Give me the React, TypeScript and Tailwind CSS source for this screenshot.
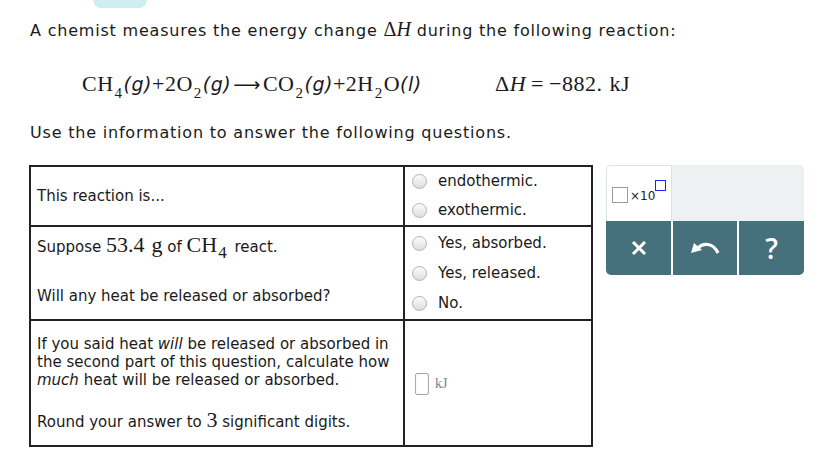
import React from "react";

const sans = { fontFamily: '"DejaVu Sans", Verdana, sans-serif' };
const serif = { fontFamily: '"Liberation Serif", "Times New Roman", serif' };

function Radio({ label, h }: { label: string; h: string }) {
  return (
    <div className={"flex items-center " + h}>
      <span className="ml-[7px] w-[15px] h-[15px] rounded-full border border-[#b4b4b4] bg-gradient-to-b from-[#fdfdfd] to-[#dcdcdc]" />
      <span className="ml-[11px] text-[15px] text-[#1a1a1a]" style={sans}>{label}</span>
    </div>
  );
}

function Sub({ c }: { c: string }) {
  return <span className="text-[15px] align-baseline relative top-[7px] ml-[1px] mr-[1px]">{c}</span>;
}

function State({ c }: { c: string }) {
  return (
    <span className="italic" style={sans}>
      <span className="text-[19px]">(</span>
      <span className="text-[19px]">{c}</span>
      <span className="text-[19px]">)</span>
    </span>
  );
}

export default function App() {
  return (
    <div className="w-[825px] h-[476px] bg-white relative overflow-hidden text-[#1a1a1a]" style={sans}>
      <div className="ml-[93px] w-[54px] h-[8px] bg-[#cdeef3] rounded-b-[8px]" />
      <div className="ml-[30px] mt-[11px] text-[16px] leading-[20px] tracking-[0.8px] whitespace-nowrap">
        A chemist measures the energy change <span style={serif} className="text-[20px] tracking-normal">Δ<i>H</i></span> during the following reaction:
      </div>
      <div className="flex items-baseline mt-[26px] h-[30px] whitespace-nowrap tracking-[0.5px]" style={serif}>
        <div className="ml-[82px] w-[413px] text-[22px]">
          CH<Sub c="4" /><State c="g" />+2O<Sub c="2" /><State c="g" />
          <span className="mx-[2px] text-[19px]" style={sans}>⟶</span>CO<Sub c="2" /><State c="g" />+2H<Sub c="2" />O<State c="l" />
        </div>
        <div className="text-[22px]">
          Δ<i>H</i><span className="mx-[5px]">=</span>−882.<span className="ml-[7px]">kJ</span>
        </div>
      </div>
      <div className="ml-[30px] mt-[26px] text-[16px] leading-[20px] tracking-[0.8px]">
        Use the information to answer the following questions.
      </div>
      <div className="flex mt-[22px]">
        <table className="ml-[29px] w-[564px] border-collapse border-2 border-[#222] text-[15px]">
          <tbody>
            <tr className="h-[59px]">
              <td className="w-[374px] border-2 border-[#222] px-[6px] align-middle">This reaction is...</td>
              <td className="border-2 border-[#222] align-top">
                <div>
                  <Radio label="endothermic." h="h-[29px]" />
                  <Radio label="exothermic." h="h-[29px]" />
                </div>
              </td>
            </tr>
            <tr className="h-[94px]">
              <td className="border-2 border-[#222] px-[6px] align-top">
                <div className="mt-[1px] flex items-baseline whitespace-nowrap">
                  Suppose&nbsp;<span style={serif} className="text-[22px]">53.4<span className="ml-[7px]">g</span></span>&nbsp;of&nbsp;<span style={serif} className="text-[22px]">CH<span className="text-[17px] relative top-[6px] ml-[1px] mr-[3px]">4</span></span>&nbsp;react.
                </div>
                <div className="mt-[24px]">Will any heat be released or absorbed?</div>
              </td>
              <td className="border-2 border-[#222] align-top">
                <div className="pt-[1px]">
                  <Radio label="Yes, absorbed." h="h-[30px]" />
                  <Radio label="Yes, released." h="h-[30px]" />
                  <Radio label="No." h="h-[30px]" />
                </div>
              </td>
            </tr>
            <tr className="h-[126px]">
              <td className="border-2 border-[#222] px-[6px] align-top leading-[18px]">
                <div className="mt-[14px]">
                  If you said heat <i>will</i> be released or absorbed in the second part of this question, calculate how <i>much</i> heat will be released or absorbed.
                </div>
                <div className="mt-[22px] flex items-baseline">
                  Round your answer to&nbsp;<span style={serif} className="text-[22px]">3</span>&nbsp;significant digits.
                </div>
              </td>
              <td className="border-2 border-[#222] align-middle">
                <div className="flex items-center ml-[10px] mt-[1px]">
                  <span className="w-[14px] h-[22px] border border-[#a8a8a8] rounded-[2px] shadow-[inset_0_0_1px_#ccc]" />
                  <span style={serif} className="ml-[6px] text-[14px] text-[#6f8396]">kJ</span>
                </div>
              </td>
            </tr>
          </tbody>
        </table>
        <div className="ml-[13px] w-[198px] h-[110px] rounded-[5px] overflow-hidden flex flex-col">
          <div className="h-[56px] flex bg-[#eef1f2]">
            <div className="w-[66px] bg-white border border-[#dde3e5] border-b-0 rounded-tl-[5px] flex items-center pl-[5px] pt-[2px]">
              <span className="w-[16px] h-[16px] border border-[#9a9a9a]" />
              <span className="ml-[2px] text-[12px] text-[#222] relative top-[1px]" style={sans}>×10</span>
              <span className="w-[11px] h-[11px] border border-[#2020ff] relative -top-[9px]" />
            </div>
          </div>
          <div className="h-[54px] flex gap-[2px] bg-white">
            <div className="w-[65px] bg-[#47707d] flex items-center justify-center">
              <svg width="16" height="16" viewBox="0 0 16 16"><path d="M2 2 L14 14 M14 2 L2 14" stroke="white" strokeWidth="3" /></svg>
            </div>
            <div className="w-[64px] bg-[#47707d] flex items-center justify-center">
              <svg width="30" height="14" viewBox="0 0 30 14">
                <path d="M8 7 C13 1.5, 23 1.5, 28 12" stroke="white" strokeWidth="3.2" fill="none" />
                <path d="M1 12 L4 2 L12 9 Z" fill="white" />
              </svg>
            </div>
            <div className="flex-1 bg-[#47707d] flex items-center justify-center">
              <span className="text-white text-[28px] font-semibold leading-none" style={{ fontFamily: '"Open Sans", sans-serif' }}>?</span>
            </div>
          </div>
        </div>
      </div>
    </div>
  );
}
